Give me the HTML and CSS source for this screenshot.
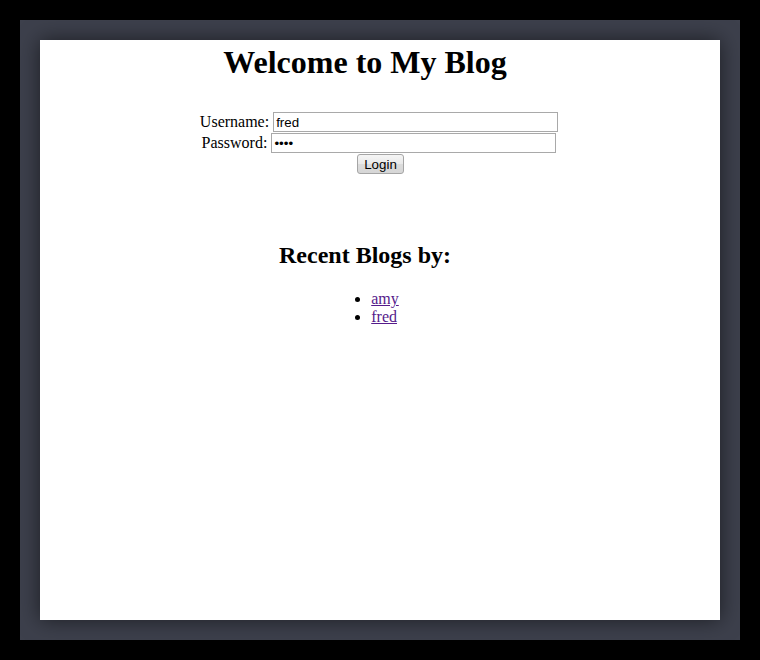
FILE: index.html
```html
<!DOCTYPE html>
<html>
<head>
<meta charset="utf-8">
<title>My Blog</title>
<link rel="stylesheet" href="styles.css">
</head>
<body>
<div class="frame">
  <div class="page">
    <h1 class="title">Welcome to My Blog</h1>
    <form class="login">
      <div class="row row-user"><label>Username:&nbsp;</label><input class="field field-user" type="text" value="fred"></div>
      <div class="row row-pass"><label>Password:&nbsp;</label><input class="field field-pass" type="password" value="abcd"></div>
      <div class="row row-btn"><button class="btn" type="button">Login</button></div>
    </form>
    <h2 class="recent">Recent Blogs by:</h2>
    <div class="blog-wrap">
      <ul class="blogs">
        <li><a href="#amy">amy</a></li>
        <li><a href="#fred">fred</a></li>
      </ul>
    </div>
  </div>
</div>
</body>
</html>
```

FILE: styles.css
```css
html, body {
  margin: 0;
  padding: 0;
  background: #000;
}
body {
  font-family: "Liberation Serif", "Times New Roman", serif;
  font-size: 16px;
  color: #000;
}
.frame {
  margin: 20px;
  width: 680px;
  height: 580px;
  padding: 20px;
  background: #3d404c;
}
.page {
  width: 680px;
  height: 580px;
  background: #fff;
  box-shadow: 0 0 20px rgba(0, 0, 0, 0.55);
  padding-top: 4px;
  box-sizing: border-box;
  overflow: hidden;
}
.title {
  margin: 0;
  padding-right: 30px;
  text-align: center;
  font-size: 32px;
  font-weight: bold;
  line-height: normal;
}
.login {
  margin: 31px 0 0;
}
.row {
  display: flex;
  justify-content: center;
  align-items: baseline;
  height: 21px;
  padding-right: 2px;
}
.row-btn {
  height: 22px;
  align-items: flex-start;
  padding-right: 0;
  padding-left: 1px;
}
.field {
  box-sizing: border-box;
  width: 285px;
  height: 20px;
  margin: 0;
  padding: 1px 2px;
  border: 1px solid #a9a9a9;
  font-family: "Liberation Sans", Arial, sans-serif;
  font-size: 13.333px;
  color: #000;
  background: #fff;
  outline: none;
}
.btn {
  box-sizing: border-box;
  margin-top: 0;
  width: 47px;
  height: 20px;
  padding: 0 6px;
  border: 1px solid #a5a5a5;
  border-radius: 3px;
  background: linear-gradient(#f5f5f5, #e9e9e9 50%, #dcdcdc 51%, #d6d6d6);
  font-family: "Liberation Sans", Arial, sans-serif;
  font-size: 13.333px;
  color: #000;
}
.recent {
  margin: 66px 0 0;
  padding-right: 30px;
  text-align: center;
  font-size: 24px;
  font-weight: bold;
  line-height: normal;
}
.blog-wrap {
  margin-top: 21px;
  padding-right: 30px;
  text-align: center;
}
.blogs {
  display: inline-block;
  margin: 0;
  padding: 0 0 0 40px;
  text-align: left;
}
.blogs a {
  color: #551a8b;
}
```
